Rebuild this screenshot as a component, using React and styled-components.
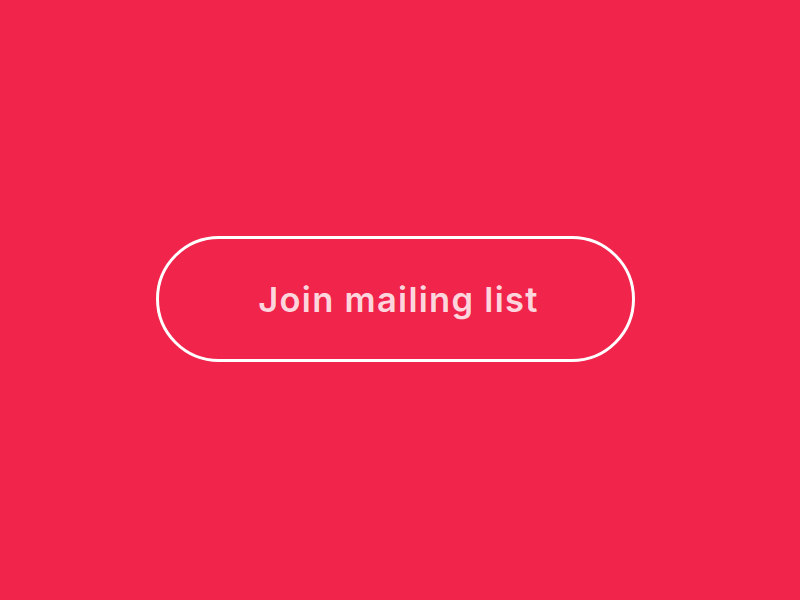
import React from "react";
import styled, { createGlobalStyle } from "styled-components";

const GlobalStyle = createGlobalStyle`
  html, body {
    margin: 0;
    padding: 0;
    height: 100%;
    background: #f1244c;
  }
  #root {
    height: 100%;
  }
`;

const Page = styled.div`
  height: 600px;
  display: flex;
  align-items: center;
  justify-content: center;
  padding-right: 10px;
  padding-bottom: 2px;
  box-sizing: border-box;
`;

const PillButton = styled.button`
  width: 479px;
  height: 126px;
  box-sizing: border-box;
  border: 3px solid #ffffff;
  border-radius: 63px;
  background: transparent;
  color: rgba(255, 255, 255, 0.82);
  font-family: Inter, "Noto Sans", sans-serif;
  font-weight: 600;
  font-size: 34.5px;
  letter-spacing: 1.3px;
  padding: 0 0 0 7px;
  cursor: pointer;
  display: flex;
  align-items: center;
  justify-content: center;
`;

export default function App() {
  return (
    <>
      <GlobalStyle />
      <Page>
        <PillButton>Join mailing list</PillButton>
      </Page>
    </>
  );
}
